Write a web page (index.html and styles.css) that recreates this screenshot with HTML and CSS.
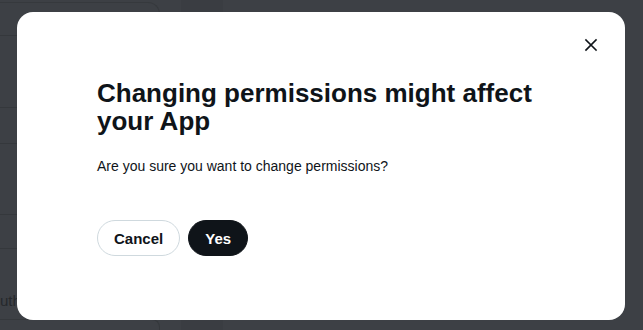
FILE: index.html
```html
<!DOCTYPE html>
<html lang="en">
<head>
<meta charset="utf-8">
<title>Changing permissions</title>
<link rel="stylesheet" href="styles.css">
</head>
<body>
<div class="page">
  <div class="side">
    <div class="card-top"></div>
    <div class="row r1"></div>
    <div class="row r2"></div>
    <div class="row r3"></div>
    <div class="row r4"></div>
    <div class="row r5"><span class="row-text">uth</span></div>
    <div class="row r6"></div>
  </div>
  <div class="stripe"></div>
</div>
<div class="overlay">
  <div class="modal" role="dialog">
    <button class="close" aria-label="Close">
      <svg viewBox="0 0 24 24" width="20" height="20"><path d="M6 6l12 12M18 6L6 18" stroke="#0f1419" stroke-width="2" stroke-linecap="square" fill="none"/></svg>
    </button>
    <div class="content">
      <h1 class="title">Changing permissions might affect your App</h1>
      <p class="desc">Are you sure you want to change permissions?</p>
      <div class="actions">
        <button class="btn btn-outline">Cancel</button>
        <button class="btn btn-dark">Yes</button>
      </div>
    </div>
  </div>
</div>
</body>
</html>
```
FILE: styles.css
```css
html, body {
  margin: 0;
  padding: 0;
  width: 643px;
  height: 330px;
  overflow: hidden;
  background: #3d4045;
  font-family: "Liberation Sans", Arial, sans-serif;
}
.page {
  display: flex;
  height: 330px;
}
.side {
  width: 160px;
  display: flex;
  flex-direction: column;
}
.card-top {
  height: 33px;
  border-top: 1px solid #36393d;
  border-right: 1px solid #36393d;
  border-top-right-radius: 12px;
  margin-top: 2px;
}
.row {
  border-top: 1px solid #35383c;
}
.r1 { height: 73px; }
.r2 { height: 35px; }
.r3 { height: 72px; }
.r4 { height: 34px; }
.r5 {
  height: 72px;
  display: flex;
  align-items: flex-end;
}
.row-text {
  margin-left: 0;
  font-size: 15px;
  color: #25282c;
  line-height: 36px;
}
.r6 { height: 10px; border-top-right-radius: 8px; border-right: 1px solid #35383c; }
.stripe {
  margin-left: 21px;
  width: 42px;
  background: #3a3d42;
}
.overlay {
  position: absolute;
  inset: 0;
  display: flex;
  align-items: flex-start;
  justify-content: flex-start;
}
.modal {
  position: relative;
  margin: 12px 0 0 17px;
  width: 608px;
  height: 308px;
  background: #ffffff;
  border-radius: 16px;
  box-sizing: border-box;
}
.close {
  position: absolute;
  top: 23px;
  right: 24px;
  width: 20px;
  height: 20px;
  padding: 0;
  border: 0;
  background: transparent;
  display: flex;
  align-items: center;
  justify-content: center;
}
.content {
  padding: 67px 80px 0 80px;
}
.title {
  margin: 0;
  font-size: 26px;
  line-height: 28px;
  font-weight: 700;
  color: #0f1419;
}
.desc {
  margin: 21px 0 0 0;
  font-size: 14px;
  line-height: 20px;
  color: #0f1419;
}
.actions {
  display: flex;
  gap: 8px;
  margin-top: 44px;
}
.btn {
  height: 36px;
  border-radius: 18px;
  font-family: "Liberation Sans", Arial, sans-serif;
  font-size: 15px;
  font-weight: 700;
  padding: 0 16px;
  cursor: pointer;
}
.btn-outline {
  background: #fff;
  color: #0f1419;
  border: 1px solid #cfd9de;
}
.btn-dark {
  background: #0f1419;
  color: #fff;
  border: 1px solid #0f1419;
}
```
